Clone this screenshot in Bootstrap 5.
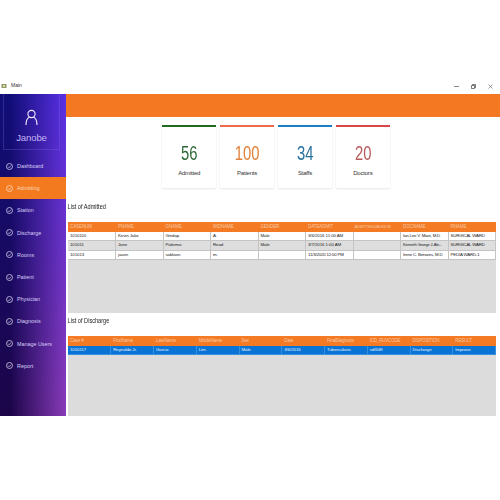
<!doctype html>
<html lang="en"><head><meta charset="utf-8"><title>Main</title>
<link rel="stylesheet" href="https://cdn.jsdelivr.net/npm/bootstrap@5.3.0/dist/css/bootstrap.min.css">
<style>
html,body{width:500px;height:500px;overflow:hidden;background:#fff;font-family:"Liberation Sans",Arial,sans-serif}
.topgap{height:78px}
.titlebar{height:16px;font-size:5px;color:#333;padding:0 7px 0 1px}
.winapp{width:100%;height:322px}
.sidebar{width:66px;flex:none;position:relative;background:linear-gradient(to bottom,#100e78 0%,#180a62 50%,#1c0548 100%)}
.sidebar::before{content:"";position:absolute;inset:0;background:linear-gradient(to bottom,#5a30e6 0%,#6d34cc 45%,#8a3cb8 100%);-webkit-mask-image:linear-gradient(to right,transparent 15%,#000);mask-image:linear-gradient(to right,transparent 15%,#000)}
.sidehead{position:relative;height:56px;margin:0 6px 5px 3px;border:1px solid rgba(120,110,230,.3);border-top:0;color:#c4b2f4;font-size:9.6px;padding-top:15px}
.sidehead div{margin-top:6px;line-height:12px;font-weight:400;letter-spacing:-.15px}
.sideitem{position:relative;height:22.2px;padding-left:6px;gap:4px;font-size:5.4px;color:#d6cdf5}
.sideitem.on{background:#f47a20;color:#f8d8bc}
.mainpane{flex:1;min-width:0;padding-right:4px}
.band{height:23px;background:#f47721;margin-right:-4px}
.tiles{gap:3.5px;margin:8px 0 0 96px;width:228px}
.tile{width:54.5px;height:63px;box-shadow:0 1px 2px rgba(0,0,0,.1);background:#fff;border-top:2px solid;padding-top:15px}
.tile b{font-weight:400;font-size:19.5px;line-height:22px;display:block;transform:scaleX(.76)}
.tile span{font-size:6px;line-height:8px;display:block;margin-top:5px;color:#333;letter-spacing:-.2px}
.caption{font-size:7px;line-height:8px;color:#222;padding-left:2px;transform:scaleX(.8);transform-origin:0 50%}
.gridbox{margin-left:2px;background:#dcdcdc;overflow:hidden}
.gridbox .table{table-layout:fixed;margin:0;font-size:4.4px;line-height:8px;--bs-table-bg:transparent;border-color:#c4c4c4;letter-spacing:-.08px}
.gridbox th,.gridbox td{padding:0 0 0 2px;height:9.4px;white-space:nowrap;overflow:hidden;font-weight:400;color:#222;border-width:0 1px 1px 0}
.gridbox th{background:#f47a24;color:#f7c9a4;border-color:#f47a24;font-size:4.5px}
.gridbox tr.odd td{background:#fff}
.gridbox tr.even td{background:#dedede}
.gridbox tr.sel td{background:#0a74d6;color:#e8f2fb;border-color:#3a8ede}
.narrowtxt{letter-spacing:-.2px}
.gridbox th.tightest{font-size:3.9px;letter-spacing:-.25px;padding-left:1px}
.g1{height:91px}
.g2{height:80px}
</style></head><body>
<div class="topgap"></div>
<div class="titlebar d-flex align-items-center">
<svg width="6" height="6" viewBox="0 0 6 6"><rect x=".5" y="1" width="5" height="4" fill="#8a9a70"/><rect x="2" y="2" width="2" height="2" fill="#e8d890"/></svg>
<span class="ms-1">Main</span>
<div class="ms-auto d-flex align-items-center" style="gap:12px">
<svg width="5" height="5" viewBox="0 0 5 5"><path d="M0 2.5H5" stroke="#555" stroke-width=".7"/></svg>
<svg width="5" height="5" viewBox="0 0 5 5"><path d="M.5 1.5h3v3h-3zM1.5 1.5v-1h3v3h-1" fill="none" stroke="#444" stroke-width=".7"/></svg>
<svg width="5" height="5" viewBox="0 0 5 5"><path d="M.5.5l4 4M4.5.5l-4 4" stroke="#555" stroke-width=".6"/></svg>
</div></div>
<div class="winapp d-flex">
<nav class="sidebar">
<div class="sidehead text-center">
<svg class="d-block mx-auto" width="13" height="17" viewBox="0 0 13 17" fill="none" stroke="#efeaff" stroke-width="1.1"><circle cx="6.5" cy="5" r="3.6"/><path d="M1 16c0-4.5 2-7.3 3.6-8M12 16c0-4.5-2-7.3-3.6-8"/></svg>
<div>Janobe</div>
</div>
<div class="sideitem d-flex align-items-center"><svg width="7" height="7" viewBox="0 0 7 7" fill="none" stroke="#efeaff" stroke-width=".7"><circle cx="3.5" cy="3.5" r="3"/><path d="M2 3.6l1.1 1.1L5 2.6"/></svg><span>Dashboard</span></div>
<div class="sideitem on d-flex align-items-center"><svg width="7" height="7" viewBox="0 0 7 7" fill="none" stroke="#fbe6d4" stroke-width=".7"><circle cx="3.5" cy="3.5" r="3"/><path d="M2 3.6l1.1 1.1L5 2.6"/></svg><span>Admitting</span></div>
<div class="sideitem d-flex align-items-center"><svg width="7" height="7" viewBox="0 0 7 7" fill="none" stroke="#efeaff" stroke-width=".7"><circle cx="3.5" cy="3.5" r="3"/><path d="M2 3.6l1.1 1.1L5 2.6"/></svg><span>Station</span></div>
<div class="sideitem d-flex align-items-center"><svg width="7" height="7" viewBox="0 0 7 7" fill="none" stroke="#efeaff" stroke-width=".7"><circle cx="3.5" cy="3.5" r="3"/><path d="M2 3.6l1.1 1.1L5 2.6"/></svg><span>Discharge</span></div>
<div class="sideitem d-flex align-items-center"><svg width="7" height="7" viewBox="0 0 7 7" fill="none" stroke="#efeaff" stroke-width=".7"><circle cx="3.5" cy="3.5" r="3"/><path d="M2 3.6l1.1 1.1L5 2.6"/></svg><span>Rooms</span></div>
<div class="sideitem d-flex align-items-center"><svg width="7" height="7" viewBox="0 0 7 7" fill="none" stroke="#efeaff" stroke-width=".7"><circle cx="3.5" cy="3.5" r="3"/><path d="M2 3.6l1.1 1.1L5 2.6"/></svg><span>Patient</span></div>
<div class="sideitem d-flex align-items-center"><svg width="7" height="7" viewBox="0 0 7 7" fill="none" stroke="#efeaff" stroke-width=".7"><circle cx="3.5" cy="3.5" r="3"/><path d="M2 3.6l1.1 1.1L5 2.6"/></svg><span>Physician</span></div>
<div class="sideitem d-flex align-items-center"><svg width="7" height="7" viewBox="0 0 7 7" fill="none" stroke="#efeaff" stroke-width=".7"><circle cx="3.5" cy="3.5" r="3"/><path d="M2 3.6l1.1 1.1L5 2.6"/></svg><span>Diagnosis</span></div>
<div class="sideitem d-flex align-items-center"><svg width="7" height="7" viewBox="0 0 7 7" fill="none" stroke="#efeaff" stroke-width=".7"><circle cx="3.5" cy="3.5" r="3"/><path d="M2 3.6l1.1 1.1L5 2.6"/></svg><span>Manage Users</span></div>
<div class="sideitem d-flex align-items-center"><svg width="7" height="7" viewBox="0 0 7 7" fill="none" stroke="#efeaff" stroke-width=".7"><circle cx="3.5" cy="3.5" r="3"/><path d="M2 3.6l1.1 1.1L5 2.6"/></svg><span>Report</span></div>
</nav>
<main class="mainpane">
<div class="band"></div>
<div class="tiles d-flex">
<div class="tile text-center" style="border-color:#1f6b1f"><b style="color:#2e6b3a">56</b><span>Admitted</span></div>
<div class="tile text-center" style="border-color:#ee6a4c"><b style="color:#e0813a">100</b><span>Patients</span></div>
<div class="tile text-center" style="border-color:#1a7fc4"><b style="color:#27709f">34</b><span>Staffs</span></div>
<div class="tile text-center" style="border-color:#d8464c"><b style="color:#b85a5a">20</b><span>Doctors</span></div>
</div>
<div class="caption" style="margin-top:15px">List of Admitted</div>
<div class="gridbox g1" style="margin-top:11px">
<table class="table"><thead><tr><th>CASENUM</th><th>PNAME</th><th>GNAME</th><th>MIDNAME</th><th>GENDER</th><th>DATEADMIT</th><th class="tightest">ADMITTINGDIAGNOSI</th><th>DOCNAME</th><th>RNAME</th></tr></thead>
<tbody>
<tr class="odd"><td>1010110</td><td>Kevin Jake</td><td>Gindap</td><td>A.</td><td>Male</td><td>3/6/2016 11:00 AM</td><td></td><td class="narrowtxt">Ian Lee V. Maet, M.D</td><td class="narrowtxt">SURGICAL WARD</td></tr>
<tr class="even"><td>101011</td><td>Jane</td><td>Palermo</td><td>Read</td><td>Male</td><td>3/7/2016 1:00 AM</td><td></td><td class="narrowtxt" style="font-size:4px">Kenneth George J. Ale...</td><td class="narrowtxt">SURGICAL WARD</td></tr>
<tr class="odd"><td>101013</td><td>jason</td><td>sabloon</td><td>m.</td><td></td><td class="narrowtxt">11/3/2020 12:00 PM</td><td></td><td class="narrowtxt">Irene C. Benares, M.D</td><td class="narrowtxt">PEDIA WARD-1</td></tr>
</tbody></table></div>
<div class="caption" style="margin-top:4px">List of Discharge</div>
<div class="gridbox g2" style="margin-top:11px">
<table class="table"><thead><tr><th>Case #</th><th>FirstName</th><th>LastName</th><th class="narrowtxt">MiddleName</th><th>Sex</th><th>Date</th><th class="narrowtxt">FinalDiagnosis</th><th class="narrowtxt">ICD_RUVCODE</th><th class="narrowtxt">DISPOSITION</th><th>RESULT</th></tr></thead>
<tbody><tr class="sel"><td>1010117</td><td>Reynaldo Jr.</td><td>Garcia</td><td>Lim</td><td>Male</td><td>3/6/2016</td><td>Tuberculosis</td><td>sdf34ff</td><td>Discharge</td><td>Improve</td></tr></tbody></table></div>
</main>
</div>
<script src="https://cdn.jsdelivr.net/npm/bootstrap@5.3.0/dist/js/bootstrap.bundle.min.js"></script>
</body></html>
